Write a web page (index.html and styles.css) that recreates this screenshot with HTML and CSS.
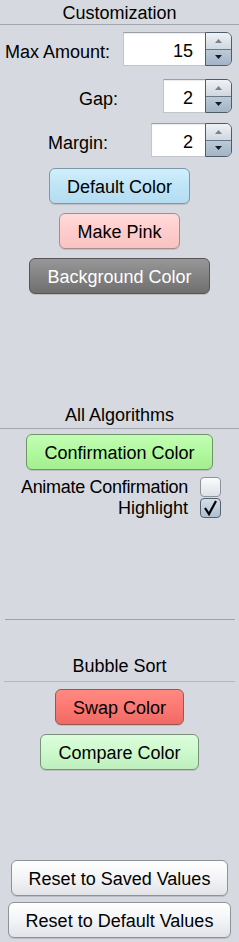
FILE: index.html
```html
<!DOCTYPE html>
<html>
<head>
<meta charset="utf-8">
<link rel="stylesheet" href="styles.css">
</head>
<body>
<div class="panel">
  <div class="title title-top">Customization</div>

  <div class="spin-row row1">
    <span class="label lab1">Max Amount:</span>
    <div class="field f1">15</div>
    <div class="arrows">
      <div class="arr up"><svg width="7" height="4" viewBox="0 0 7 4"><polygon points="0,4 7,4 3.5,0" fill="#76828f"/></svg></div>
      <div class="arr down"><svg width="7" height="4" viewBox="0 0 7 4"><polygon points="0,0 7,0 3.5,4" fill="#141d27"/></svg></div>
    </div>
  </div>

  <div class="spin-row row2">
    <span class="label lab2">Gap:</span>
    <div class="field f2">2</div>
    <div class="arrows">
      <div class="arr up"><svg width="7" height="4" viewBox="0 0 7 4"><polygon points="0,4 7,4 3.5,0" fill="#76828f"/></svg></div>
      <div class="arr down"><svg width="7" height="4" viewBox="0 0 7 4"><polygon points="0,0 7,0 3.5,4" fill="#141d27"/></svg></div>
    </div>
  </div>

  <div class="spin-row row3">
    <span class="label lab3">Margin:</span>
    <div class="field f3">2</div>
    <div class="arrows">
      <div class="arr up"><svg width="7" height="4" viewBox="0 0 7 4"><polygon points="0,4 7,4 3.5,0" fill="#76828f"/></svg></div>
      <div class="arr down"><svg width="7" height="4" viewBox="0 0 7 4"><polygon points="0,0 7,0 3.5,4" fill="#141d27"/></svg></div>
    </div>
  </div>

  <div class="btn btn-blue b-default">Default Color</div>
  <div class="btn btn-pink b-pink">Make Pink</div>
  <div class="btn btn-gray b-bg">Background Color</div>

  <div class="title title-alg">All Algorithms</div>
  <div class="btn btn-green b-confirm">Confirmation Color</div>

  <div class="check-row ck1">
    <span class="ck-label ck-tight">Animate Confirmation</span>
    <span class="box"></span>
  </div>
  <div class="check-row ck2">
    <span class="ck-label">Highlight</span>
    <span class="box checked"><svg width="21" height="20" viewBox="0 0 21 20"><polyline points="5,10 9,16 16,3" fill="none" stroke="#000" stroke-width="2.2" stroke-linejoin="miter"/></svg></span>
  </div>

  <div class="sep"></div>
  <div class="title title-bubble">Bubble Sort</div>

  <div class="btn btn-red b-swap">Swap Color</div>
  <div class="btn btn-lgreen b-compare">Compare Color</div>

  <div class="btn btn-white b-saved">Reset to Saved Values</div>
  <div class="btn btn-white b-reset">Reset to Default Values</div>
</div>
</body>
</html>
```

FILE: styles.css
```css
html, body {
  margin: 0;
  padding: 0;
  background: #d6d9df;
}
body {
  width: 239px;
  height: 942px;
  overflow: hidden;
  font-family: "Liberation Sans", Arial, sans-serif;
  font-size: 18px;
  color: #000;
}
.panel {
  display: flex;
  flex-direction: column;
  align-items: center;
  width: 239px;
  height: 942px;
}

/* section titles */
.title {
  align-self: stretch;
  text-align: center;
  line-height: 21px;
  border-bottom: 1px solid #a3a7ad;
}
.title-top {
  padding-top: 3px;
  height: 21px;
}
.title-alg {
  margin-top: 111px;
  padding-bottom: 2px;
}
.title-bubble {
  margin-top: 36px;
  padding-bottom: 4px;
  margin-left: 4px;
  margin-right: 4px;
  border-bottom-color: #b4b8be;
}
.sep {
  align-self: stretch;
  margin: 100px 4px 0 5px;
  height: 0;
  border-top: 1px solid #9ea2a8;
}

/* spinners */
.spin-row {
  align-self: stretch;
  display: flex;
  justify-content: flex-end;
  padding-right: 7px;
  height: 34px;
}
.row1 { margin-top: 7px; }
.row2 { margin-top: 13px; }
.row3 { margin-top: 10px; }
.label {
  padding-top: 6px;
  line-height: 28px;
  height: 28px;
}
.lab1 { margin-right: 13px; }
.lab2 { margin-right: 45px; }
.lab3 { margin-right: 43px; }
.field {
  box-sizing: border-box;
  height: 34px;
  background: #fff;
  border: 1px solid #c2c6cc;
  border-top-color: #9ba0a7;
  border-right: none;
  box-shadow: inset 0 1px 1px rgba(0,0,0,0.08);
  padding: 5px 12px 0 0;
  line-height: 27px;
  text-align: right;
}
.f1 { width: 82px; }
.f2 { width: 42px; }
.f3 { width: 54px; }
.arrows {
  box-sizing: border-box;
  width: 27px;
  height: 34px;
  border: 1px solid #4f5b68;
  border-radius: 0 6px 6px 0;
  overflow: hidden;
  display: flex;
  flex-direction: column;
}
.arr {
  flex: 1;
  display: flex;
  align-items: center;
  justify-content: center;
}
.arr svg { display: block; }
.up {
  background: linear-gradient(#eff2f5, #d0d7df);
  border-bottom: 1px solid #6a7785;
}
.down {
  background: linear-gradient(#bccad8, #a3b4c6);
}

/* buttons */
.btn {
  box-sizing: border-box;
  height: 36px;
  padding: 2px 17px 0;
  line-height: 32px;
  text-align: center;
  white-space: nowrap;
  border: 1px solid #7f8a94;
  border-radius: 6px;
  box-shadow: 0 1px 0 rgba(0,0,0,0.12);
}
.btn-blue {
  background: linear-gradient(#d0effd, #bfe4f7 50%, #b5dcf1);
  border-color: #7f98a6;
}
.btn-pink {
  background: linear-gradient(#ffdada, #ffcccc 50%, #f7c3c3);
  border-color: #a88c8c;
}
.btn-gray {
  background: linear-gradient(#979797, #838383 50%, #6f6f6f);
  border-color: #555;
  color: #fff;
}
.btn-green {
  background: linear-gradient(#c2fdb3, #b1f99f 50%, #a3ef8f);
  border-color: #6f9467;
}
.btn-red {
  background: linear-gradient(#ff8a82, #fc7872 50%, #f06a65);
  border-color: #9a5652;
}
.btn-lgreen {
  background: linear-gradient(#dcfddc, #cdf9cd 50%, #bdefbd);
  border-color: #79937a;
}
.btn-white {
  background: linear-gradient(#ffffff, #f3f4f6 50%, #e1e3e7);
  border-color: #8d939b;
}
.b-default { margin-top: 11px; }
.b-pink { margin-top: 9px; }
.b-bg { margin-top: 9px; }
.b-confirm { margin-top: 5px; }
.b-swap { margin-top: 7px; }
.b-compare { margin-top: 9px; }
.b-saved { margin-top: 90px; }
.b-reset { margin-top: 6px; }

/* checkboxes */
.check-row {
  align-self: stretch;
  display: flex;
  justify-content: flex-end;
  align-items: flex-start;
  padding-right: 18px;
  height: 21px;
}
.ck1 { margin-top: 7px; }
.ck-label {
  line-height: 21px;
  margin-right: 12px;
}
.ck-tight { letter-spacing: -0.3px; }
.box {
  box-sizing: border-box;
  width: 21px;
  height: 20px;
  border: 1px solid #8c939b;
  border-radius: 4px;
  background: linear-gradient(#fbfcfd, #dde1e6);
  position: relative;
}
.box.checked {
  border-color: #56626f;
  background: linear-gradient(#d3dee9, #aebfd1);
}
.box svg {
  position: absolute;
  left: -1px;
  top: -1px;
}
```
